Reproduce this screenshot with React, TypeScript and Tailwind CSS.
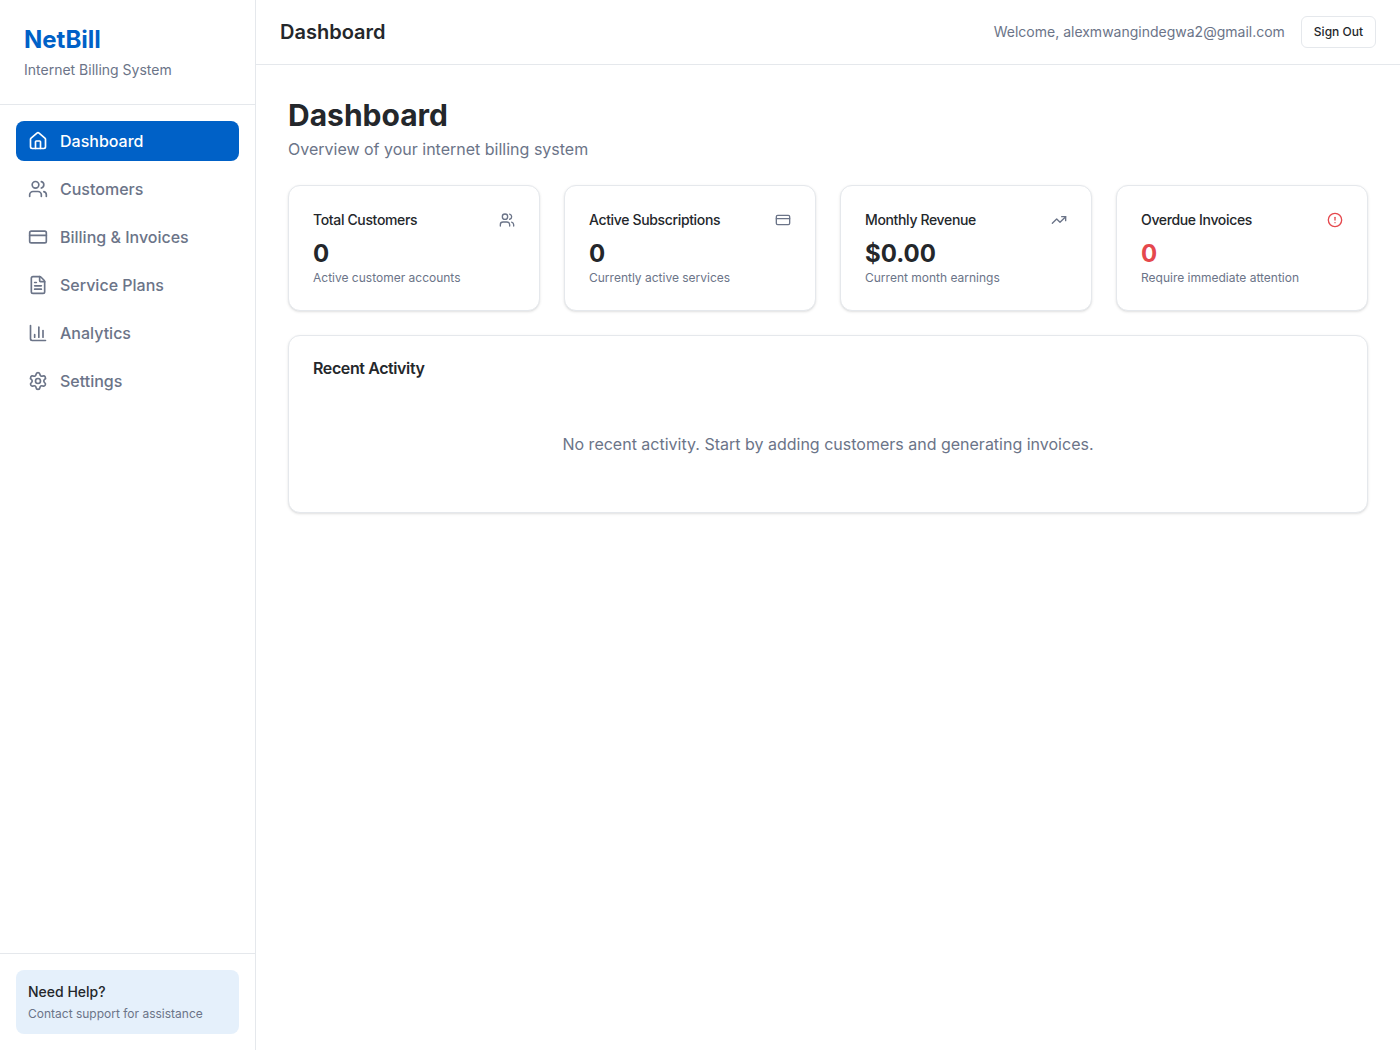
import { AlertCircle, BarChart3, CreditCard, FileText, Home, Settings, TrendingUp, Users } from "lucide-react";

const nav = [
  { label: "Dashboard", Icon: Home, active: true },
  { label: "Customers", Icon: Users },
  { label: "Billing & Invoices", Icon: CreditCard },
  { label: "Service Plans", Icon: FileText },
  { label: "Analytics", Icon: BarChart3 },
  { label: "Settings", Icon: Settings },
];

const cards = [
  { title: "Total Customers", value: "0", desc: "Active customer accounts", Icon: Users },
  { title: "Active Subscriptions", value: "0", desc: "Currently active services", Icon: CreditCard },
  { title: "Monthly Revenue", value: "$0.00", desc: "Current month earnings", Icon: TrendingUp },
  { title: "Overdue Invoices", value: "0", desc: "Require immediate attention", Icon: AlertCircle, danger: true },
];

export default function App() {
  return (
    <div className="flex min-h-[1050px] bg-white font-['Inter',sans-serif] text-[#24272b]">
      <aside className="flex w-[256px] shrink-0 flex-col border-r border-[#e5e8ec]">
        <div className="border-b border-[#e5e8ec] p-6">
          <div className="text-2xl font-bold text-[#0061c7]">NetBill</div>
          <div className="mt-1 text-sm text-[#6b7488]">Internet Billing System</div>
        </div>
        <nav className="flex flex-1 flex-col gap-2 p-4">
          {nav.map(({ label, Icon, active }) => (
            <div
              key={label}
              className={
                active
                  ? "flex h-10 items-center gap-3 rounded-lg bg-[#0061c7] px-3 font-medium text-white"
                  : "flex h-10 items-center gap-3 rounded-lg px-3 font-medium text-[#6b7488]"
              }
            >
              <Icon size={20} />
              <span>{label}</span>
            </div>
          ))}
        </nav>
        <div className="border-t border-[#e5e8ec] p-4">
          <div className="rounded-lg bg-[#e5f0fb] p-3">
            <div className="text-sm font-medium">Need Help?</div>
            <div className="mt-1 text-xs text-[#6b7488]">Contact support for assistance</div>
          </div>
        </div>
      </aside>
      <div className="flex min-w-0 flex-1 flex-col">
        <header className="flex h-[65px] items-center justify-between border-b border-[#e5e8ec] px-6">
          <div className="text-xl font-semibold">Dashboard</div>
          <div className="flex items-center gap-4">
            <span className="text-sm text-[#6b7488]">Welcome, alexmwangindegwa2@gmail.com</span>
            <button className="h-8 rounded-md border border-[#e5e8ec] bg-white px-3 text-xs font-medium">Sign Out</button>
          </div>
        </header>
        <main className="p-8">
          <h1 className="text-3xl font-bold">Dashboard</h1>
          <p className="mt-1 text-[#6b7488]">Overview of your internet billing system</p>
          <div className="mt-6 grid grid-cols-4 gap-6">
            {cards.map(({ title, value, desc, Icon, danger }) => (
              <div key={title} className="rounded-xl border border-[#e5e8ec] bg-white p-6 shadow-sm">
                <div className="flex items-center justify-between pb-2">
                  <span className="text-sm font-medium tracking-tight">{title}</span>
                  <Icon size={16} className={danger ? "text-[#e5484d]" : "text-[#6b7488]"} />
                </div>
                <div className={danger ? "text-2xl font-bold text-[#e5484d]" : "text-2xl font-bold"}>{value}</div>
                <div className="text-xs text-[#6b7488]">{desc}</div>
              </div>
            ))}
          </div>
          <section className="mt-6 rounded-xl border border-[#e5e8ec] bg-white p-6 shadow-sm">
            <h2 className="font-semibold leading-none tracking-tight">Recent Activity</h2>
            <p className="mt-6 py-8 text-center text-[#6b7488]">No recent activity. Start by adding customers and generating invoices.</p>
          </section>
        </main>
      </div>
    </div>
  );
}
